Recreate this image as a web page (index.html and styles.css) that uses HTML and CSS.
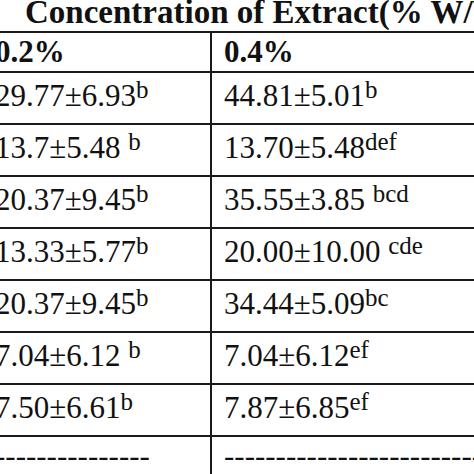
FILE: index.html
```html
<!DOCTYPE html>
<html lang="en">
<head>
  <meta charset="UTF-8">
  <title>Concentration of Extract</title>
  <link rel="stylesheet" href="styles.css">
</head>
<body>
  <div class="sheet">
    <table class="results">
      <colgroup>
        <col class="col-a">
        <col class="col-b">
        <col class="col-c">
      </colgroup>
      <thead>
        <tr>
          <th class="title" colspan="3">Concentration of Extract(% W/V)</th>
        </tr>
        <tr class="conc">
          <th>0.2%</th>
          <th>0.4%</th>
          <th>0.6%</th>
        </tr>
      </thead>
      <tbody>
        <tr><td>29.77±6.93<sup>b</sup></td><td>44.81±5.01<sup>b</sup></td><td></td></tr>
        <tr><td>13.7±5.48 <sup>b</sup></td><td>13.70±5.48<sup>def</sup></td><td></td></tr>
        <tr><td>20.37±9.45<sup>b</sup></td><td>35.55±3.85 <sup>bcd</sup></td><td></td></tr>
        <tr><td>13.33±5.77<sup>b</sup></td><td>20.00±10.00 <sup>cde</sup></td><td></td></tr>
        <tr><td>20.37±9.45<sup>b</sup></td><td>34.44±5.09<sup>bc</sup></td><td></td></tr>
        <tr><td>7.04±6.12 <sup>b</sup></td><td>7.04±6.12<sup>ef</sup></td><td></td></tr>
        <tr><td>7.50±6.61<sup>b</sup></td><td>7.87±6.85<sup>ef</sup></td><td></td></tr>
        <tr class="empty"><td>---------------</td><td>-------------------------------</td><td></td></tr>
      </tbody>
    </table>
  </div>
</body>
</html>
```

FILE: styles.css
```css
* {
  margin: 0;
  padding: 0;
  box-sizing: border-box;
}

html, body {
  width: 474px;
  height: 474px;
  overflow: hidden;
  background: #fff;
}

body {
  font-family: "Liberation Serif", "Times New Roman", serif;
  color: #111;
}

.sheet {
  margin: -10px 0 0 -17px;
}

.results {
  border-collapse: collapse;
  table-layout: fixed;
  width: 800px;
}

.col-a {
  width: 228px;
}

.col-b {
  width: 290px;
}

.results th,
.results td {
  text-align: left;
  white-space: nowrap;
  padding: 0 12px;
}

.results .title {
  height: 42px;
  font-size: 33px;
  font-weight: bold;
  line-height: 33px;
  padding: 0 0 2px 42px;
  vertical-align: bottom;
}

.conc th {
  height: 40px;
  font-size: 31px;
  font-weight: bold;
  border-top: 2px solid #1a1a1a;
  border-bottom: 2px solid #1a1a1a;
}

.results td {
  height: 52px;
  font-size: 31px;
  line-height: 31px;
  border-top: 2px solid #1a1a1a;
  padding-bottom: 6px;
}

.conc th + th,
.results td + td {
  border-left: 2px solid #1a1a1a;
}

sup {
  font-size: 25px;
  line-height: 0;
  vertical-align: 8px;
}

.empty td {
  padding-bottom: 14px;
}
```
